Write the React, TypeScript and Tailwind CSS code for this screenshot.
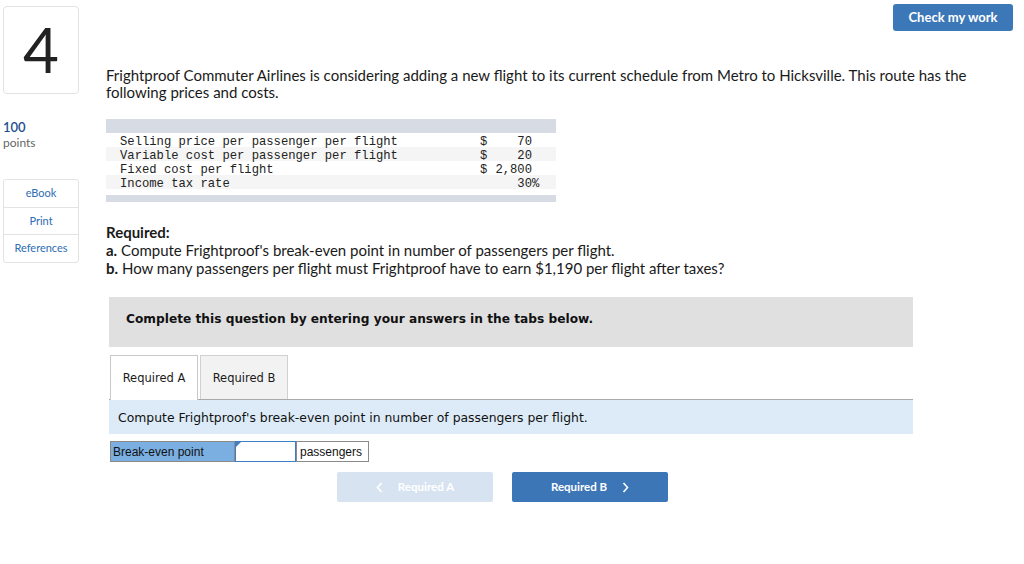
import React from "react";

const sans = { fontFamily: "Lato, 'Open Sans', sans-serif" };

const rows = [
  { label: "Selling price per passenger per flight", cur: "$", amt: "70", suf: "", shade: false },
  { label: "Variable cost per passenger per flight", cur: "$", amt: "20", suf: "", shade: true },
  { label: "Fixed cost per flight", cur: "$", amt: "2,800", suf: "", shade: false },
  { label: "Income tax rate", cur: "", amt: "30", suf: "%", shade: true },
];

function Chevron({ dir }: { dir: "left" | "right" }) {
  return (
    <svg width="7" height="11" viewBox="0 0 7 11" fill="none" stroke="currentColor" strokeWidth="1.6">
      {dir === "left" ? <path d="M5.5 1 L1.5 5.5 L5.5 10" /> : <path d="M1.5 1 L5.5 5.5 L1.5 10" />}
    </svg>
  );
}

export default function App() {
  return (
    <div className="w-[1024px] h-[564px] bg-white text-[#1a1a1a] flex" style={sans}>
      {/* colonne gauche */}
      <div className="w-[76px] ml-[3px] mt-[6px] flex flex-col">
        <div className="h-[88px] border border-[#e3e3e3] rounded-[4px] flex items-center justify-center">
          <span className="text-[62px] leading-none text-[#222] -mt-[2px]">4</span>
        </div>
        <div className="mt-[26px] text-[13px] leading-[15px] font-semibold text-[#1d4f8f]">100</div>
        <div className="text-[12px] leading-[16px] text-[#666]">points</div>
        <div className="mt-[28px] border border-[#e3e3e3] rounded-[3px] text-[11px] text-[#2e6db4]">
          <div className="h-[28px] flex items-center justify-center border-b border-[#e3e3e3]">eBook</div>
          <div className="h-[27px] flex items-center justify-center border-b border-[#e3e3e3]">Print</div>
          <div className="h-[27px] flex items-center justify-center">References</div>
        </div>
      </div>

      {/* contenu principal */}
      <div className="ml-[27px] w-[907px] flex flex-col">
        <div className="flex justify-end mt-[4px]">
          <button className="w-[120px] h-[27px] rounded-[3px] bg-[#3c77b8] text-white text-[13px] font-bold">
            Check my work
          </button>
        </div>

        <p className="mt-[36px] text-[15px] leading-[17px] pr-[40px]">
          Frightproof Commuter Airlines is considering adding a new flight to its current schedule from Metro to Hicksville. This route has the following prices and costs.
        </p>

        <div
          className="mt-[18px] w-[450px] text-[12.2px] text-[#222]"
          style={{ fontFamily: "'Liberation Mono', 'Courier New', monospace" }}
        >
          <div className="h-[14px] bg-[#d6dbe4]" />
          {rows.map((r) => (
            <div key={r.label} className={`h-[14px] leading-[14px] pt-[2px] flex ${r.shade ? "bg-[#f5f5f5]" : "bg-white"}`}>
              <div className="flex-1 pl-[14px]">{r.label}</div>
              <div className="w-[14px]">{r.cur}</div>
              <div className="w-[38px] text-right">{r.amt}</div>
              <div className="w-[7px] mr-[17px]">{r.suf}</div>
            </div>
          ))}
          <div className="h-[6px]" />
          <div className="h-[7px] bg-[#d6dbe4]" />
        </div>

        <div className="mt-[21px] text-[15px] leading-[18px]">
          <div className="font-bold">Required:</div>
          <div>
            <b>a.</b> Compute Frightproof's break-even point in number of passengers per flight.
          </div>
          <div>
            <b>b.</b> How many passengers per flight must Frightproof have to earn $1,190 per flight after taxes?
          </div>
        </div>

        <div className="ml-[3px] w-[804px]" style={{ fontFamily: "'DejaVu Sans', Verdana, sans-serif" }}>
          <div className="mt-[20px] h-[50px] bg-[#e0e0e0] flex items-center pl-[17px] pb-[6px]">
            <span className="text-[12.2px] font-bold text-[#111]">
              Complete this question by entering your answers in the tabs below.
            </span>
          </div>

          <div className="mt-[8px] flex items-end gap-[2px] pl-[1px] border-b border-[#a9a9a9] h-[45px]">
            <div className="w-[88px] h-[45px] border border-b-0 border-[#c8c8c8] bg-white flex items-center justify-center pt-[2px] text-[11.5px] -mb-px">
              Required A
            </div>
            <div className="w-[88px] h-[44px] border border-b-0 border-[#d0d0d0] bg-[#f2f2f2] flex items-center justify-center pt-[2px] text-[11.5px]">
              Required B
            </div>
          </div>

          <div className="h-[34px] bg-[#dcebf7] flex items-center pl-[9px] pt-[2px] text-[12.4px] text-[#111]">
            Compute Frightproof's break-even point in number of passengers per flight.
          </div>

          <div
            className="mt-[7px] ml-[1px] flex h-[21px] text-[12px]"
            style={{ fontFamily: "'Liberation Sans', Arial, sans-serif" }}
          >
            <div className="w-[125px] bg-[#7bafe2] border border-[#8a8a8a] flex items-center pl-[2px] text-[#111]">
              Break-even point
            </div>
            <div className="relative w-[61px] border border-[#3d7fc6] bg-white">
              <div className="absolute left-0 top-0 w-0 h-0 border-t-[5px] border-t-[#3d7fc6] border-r-[5px] border-r-transparent" />
            </div>
            <div className="w-[73px] border border-[#8a8a8a] flex items-center pl-[3px] text-[#111]">passengers</div>
          </div>

          <div className="mt-[10px] flex pl-[228px] gap-[19px]">
            <button className="w-[156px] h-[30px] rounded-[2px] bg-[#d8e3f2] text-white text-[11.5px] font-bold flex items-center justify-center gap-[15px]" style={sans}>
              <Chevron dir="left" />
              <span>Required A</span>
            </button>
            <button className="w-[156px] h-[30px] rounded-[2px] bg-[#3c76b7] text-white text-[11.5px] font-bold flex items-center justify-center gap-[15px]" style={sans}>
              <span>Required B</span>
              <Chevron dir="right" />
            </button>
          </div>
        </div>
      </div>
    </div>
  );
}
